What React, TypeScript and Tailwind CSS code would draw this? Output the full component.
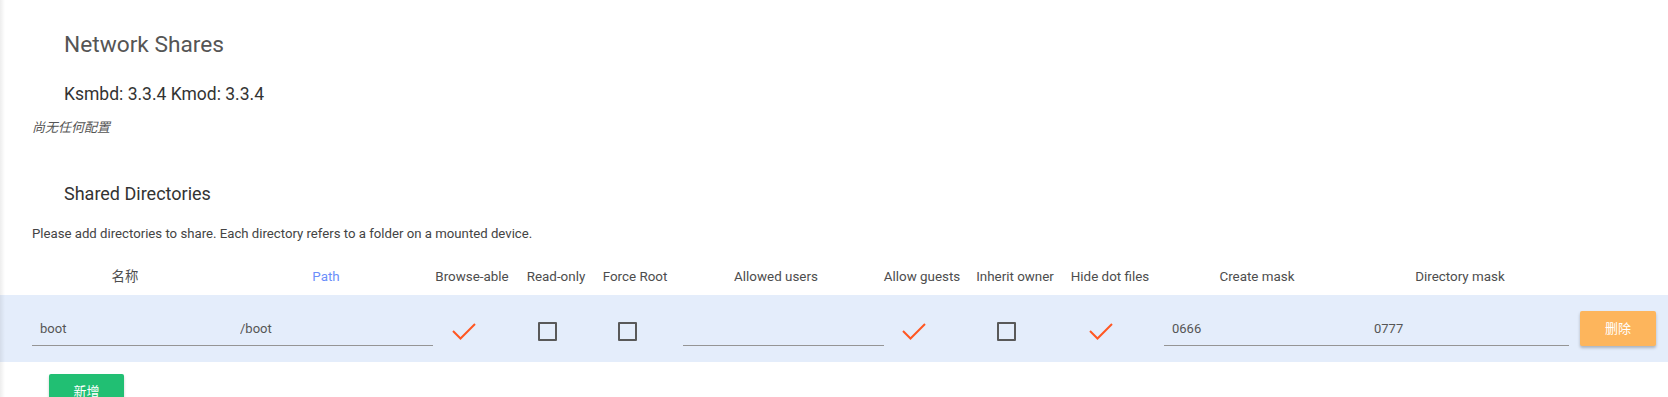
import React from "react";

const Check = () => (
  <svg width="24" height="17" viewBox="0 0 24 17" fill="none" className="mt-[5px] block">
    <polyline points="1,8 8.5,15.5 23,1" stroke="#ff5722" strokeWidth="2" />
  </svg>
);

const Box = () => (
  <span className="mt-[6px] block h-[19px] w-[19px] rounded-[1px] border-2 border-[#595959]" />
);

const inputCls =
  "h-[35px] shrink-0 border-b border-[#959595] bg-transparent pl-[8px] text-[13px] text-[#555] outline-none";

export default function App() {
  return (
    <div className="relative min-h-[397px] overflow-hidden bg-white font-[Roboto,'Noto_Sans_CJK_SC',sans-serif]">
      <div className="pointer-events-none absolute inset-y-0 left-0 w-[5px] bg-linear-to-r from-[#00000012] to-transparent" />
      <div className="pt-[30px]">
        <h2 className="pl-[64px] text-[22.7px] leading-[30px] text-[#555]">Network Shares</h2>
        <h3 className="mt-[22px] pl-[64px] text-[17.5px] leading-[24px] text-[#333]">
          Ksmbd: 3.3.4 Kmod: 3.3.4
        </h3>
        <p className="mt-[12px] pl-[32px] text-[13px] italic leading-[20px] text-[#555]">尚无任何配置</p>
        <h3 className="mt-[44px] pl-[64px] text-[18px] leading-[24px] text-[#333]">Shared Directories</h3>
        <p className="mt-[19px] pl-[32px] text-[13.2px] leading-[18px] text-[#444]">
          Please add directories to share. Each directory refers to a folder on a mounted device.
        </p>

        <div className="mt-[17px] flex h-[35px] items-center pl-[18px] text-[13.4px] text-[#4d4d4d]">
          <div className="w-[214px] shrink-0 text-center">名称</div>
          <div className="w-[188px] shrink-0 text-center text-[#6b8efa]">Path</div>
          <div className="w-[104px] shrink-0 text-center">Browse-able</div>
          <div className="w-[64px] shrink-0 text-center">Read-only</div>
          <div className="w-[94px] shrink-0 text-center">Force Root</div>
          <div className="w-[188px] shrink-0 text-center">Allowed users</div>
          <div className="w-[104px] shrink-0 text-center">Allow guests</div>
          <div className="w-[82px] shrink-0 text-center">Inherit owner</div>
          <div className="w-[108px] shrink-0 text-center">Hide dot files</div>
          <div className="w-[186px] shrink-0 text-center">Create mask</div>
          <div className="w-[220px] shrink-0 text-center">Directory mask</div>
        </div>

        <div className="flex h-[67px] items-center bg-[#e4edfb] pl-[32px]">
          <input className={`${inputCls} w-[200px]`} defaultValue="boot" readOnly />
          <input className={`${inputCls} w-[201px]`} defaultValue="/boot" readOnly />
          <div className="flex w-[62px] shrink-0 justify-center">
            <Check />
          </div>
          <div className="flex w-[104px] shrink-0 justify-center">
            <Box />
          </div>
          <div className="flex w-[56px] shrink-0 justify-center">
            <Box />
          </div>
          <input className={`${inputCls} ml-[28px] w-[201px]`} defaultValue="" readOnly />
          <div className="flex w-[60px] shrink-0 justify-center">
            <Check />
          </div>
          <div className="flex w-[124px] shrink-0 justify-center">
            <Box />
          </div>
          <div className="flex w-[66px] shrink-0 justify-center">
            <Check />
          </div>
          <input className={`${inputCls} ml-[30px] w-[202px]`} defaultValue="0666" readOnly />
          <input className={`${inputCls} w-[203px]`} defaultValue="0777" readOnly />
          <button className="ml-[11px] h-[35px] w-[76px] shrink-0 rounded-[2px] bg-[#fdb55c] text-[13px] text-white shadow-[0_2px_3px_rgba(0,0,0,0.25)]">
            删除
          </button>
        </div>

        <div className="mt-[12px] pl-[49px]">
          <button className="h-[35px] w-[75px] rounded-[2px] bg-[#21bf73] text-[13px] text-white shadow-[0_2px_3px_rgba(0,0,0,0.2)]">
            新增
          </button>
        </div>
      </div>
    </div>
  );
}
